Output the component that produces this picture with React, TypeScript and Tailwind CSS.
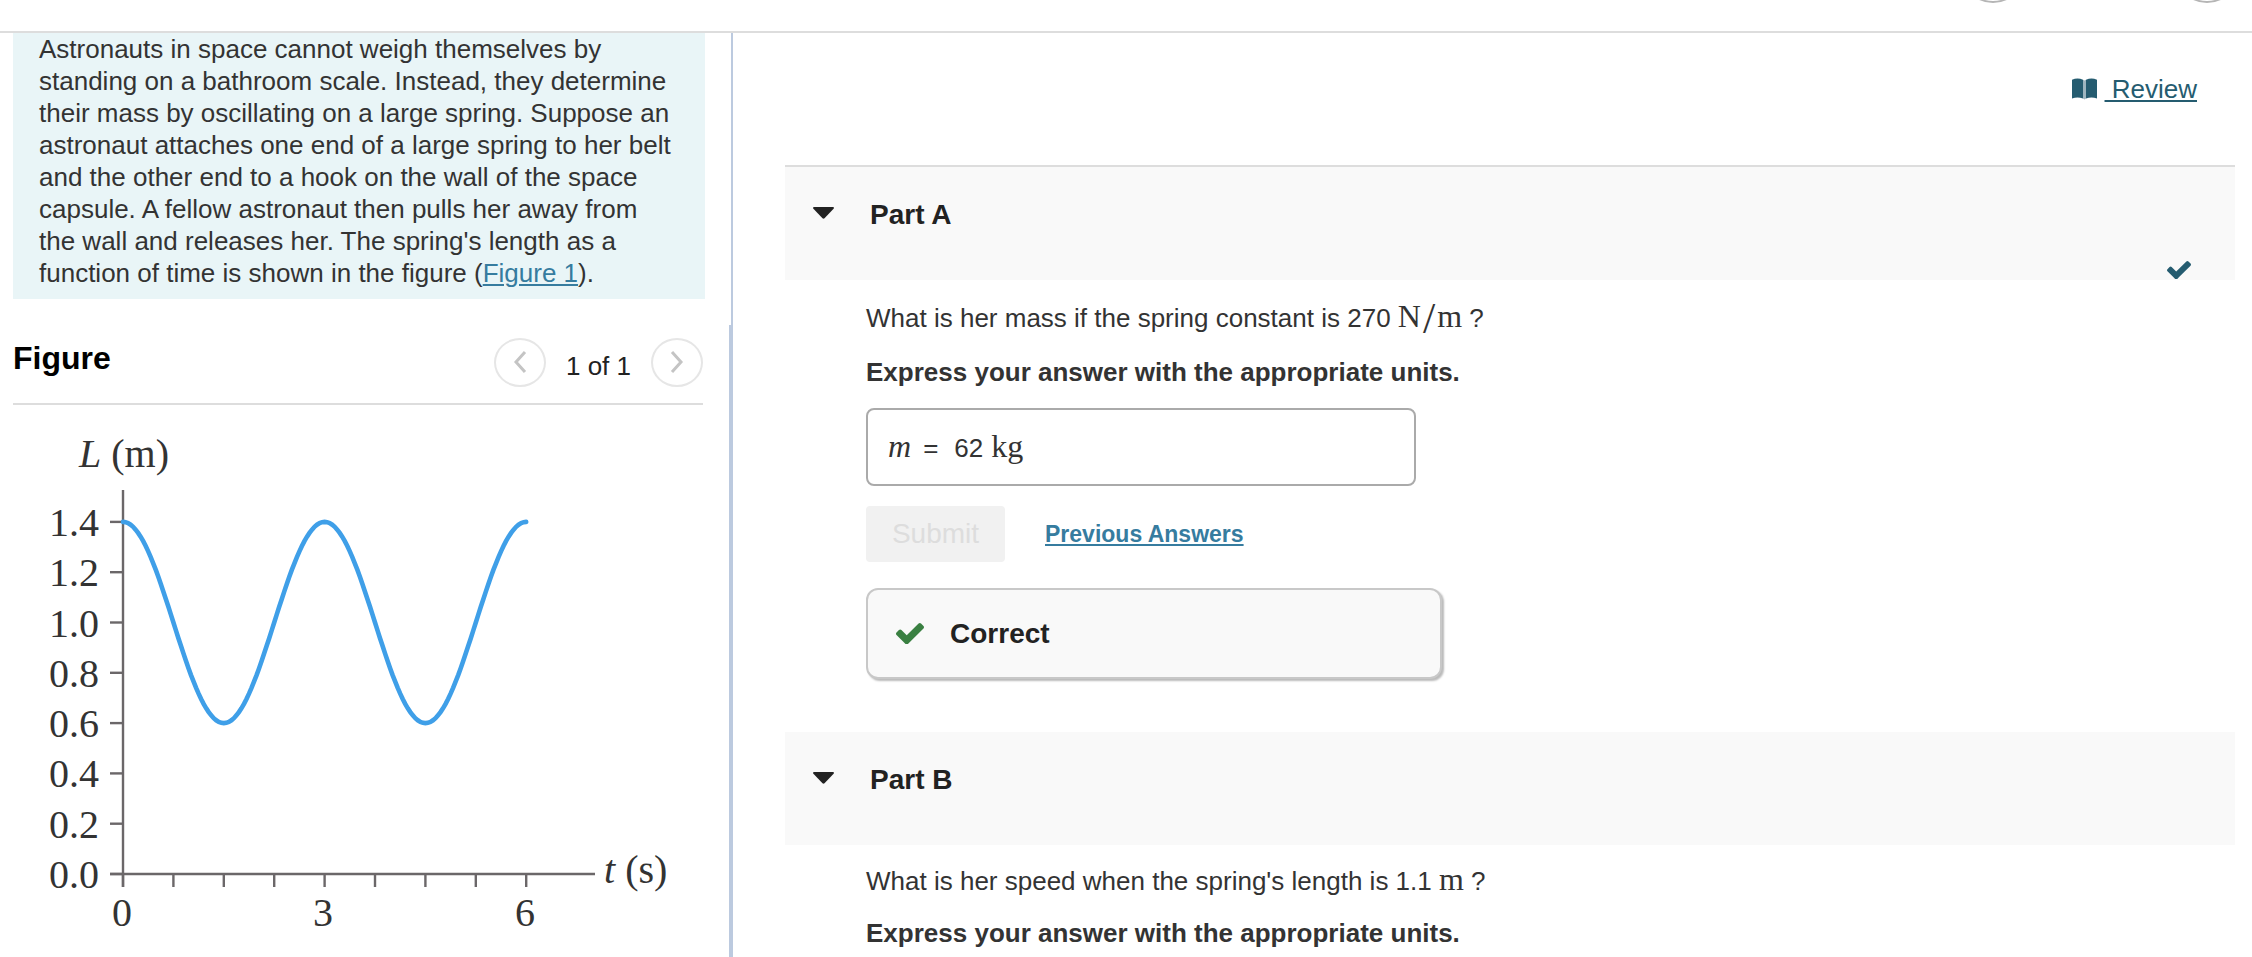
import type { ReactNode } from "react"

const Y_LABELS = ["0.0", "0.2", "0.4", "0.6", "0.8", "1.0", "1.2", "1.4"]
const X_TICKS = [0, 1, 2, 3, 4, 5, 6, 7, 8]

const ORIGIN_X = 110
const ORIGIN_Y = 469
const X_STEP = 50.4
const Y_STEP = 50.3

// L(t) = 1.0 + 0.4 cos(2πt / 3)
function buildCurve() {
  const points: string[] = []
  for (let i = 0; i <= 160; i++) {
    const t = (i / 160) * 6
    const length = 1 + 0.4 * Math.cos((2 * Math.PI * t) / 3)
    const x = ORIGIN_X + (t / 0.75) * X_STEP
    const y = ORIGIN_Y - (length / 0.2) * Y_STEP
    points.push(`${x.toFixed(1)},${y.toFixed(1)}`)
  }
  return points.join(" ")
}

function SpringChart() {
  return (
    <svg
      viewBox="0 0 690 560"
      className="block w-full font-['Liberation_Serif',serif] text-[40px]"
      fill="#333"
      role="img"
      aria-label="Spring length as a function of time"
    >
      <text x="66" y="62">
        <tspan fontStyle="italic">L</tspan>
        <tspan dx="10">(m)</tspan>
      </text>
      <g stroke="#6b6769" strokeWidth="2.4">
        <line x1={ORIGIN_X} y1="85" x2={ORIGIN_X} y2="482" />
        <line x1="97" y1={ORIGIN_Y} x2="582" y2={ORIGIN_Y} />
        {Y_LABELS.map((label, i) => (
          <line key={label} x1="97" x2={ORIGIN_X} y1={ORIGIN_Y - i * Y_STEP} y2={ORIGIN_Y - i * Y_STEP} />
        ))}
        {X_TICKS.map(i => (
          <line key={i} x1={ORIGIN_X + i * X_STEP} x2={ORIGIN_X + i * X_STEP} y1={ORIGIN_Y} y2="482" />
        ))}
      </g>
      {Y_LABELS.map((label, i) => (
        <text key={label} x="86" y={ORIGIN_Y + 14 - i * Y_STEP} textAnchor="end">
          {label}
        </text>
      ))}
      <text x="109" y="521" textAnchor="middle">0</text>
      <text x="310" y="521" textAnchor="middle">3</text>
      <text x="512" y="521" textAnchor="middle">6</text>
      <text x="591" y="478">
        <tspan fontStyle="italic">t</tspan>
        <tspan dx="10">(s)</tspan>
      </text>
      <polyline points={buildCurve()} fill="none" stroke="#3f9fe8" strokeWidth="4.6" strokeLinecap="round" />
    </svg>
  )
}

function CheckIcon({ className }: { className: string }) {
  return (
    <svg viewBox="121 334 1550 1188" fill="currentColor" aria-hidden="true" className={className}>
      <path d="M1671 566q0 40-28 68l-724 724-136 136q-28 28-68 28t-68-28l-136-136-362-362q-28-28-28-68t28-68l136-136q28-28 68-28t68 28l294 295 656-657q28-28 68-28t68 28l136 136q28 28 28 68z" />
    </svg>
  )
}

function BookIcon() {
  return (
    <svg width="25" height="22" viewBox="0 0 25 22" fill="currentColor" aria-hidden="true">
      <path d="M0 1.800Q5.500-.8 11 1.800V20.500Q5.500 18.600 0 20.500zM14 1.800Q19.500-.8 25 1.800V20.500Q19.500 18.600 14 20.500z" />
      <path d="M11 1.800 12.500 2.500 14 1.800V20.500L12.500 21.500 11 20.500z" opacity=".45" />
    </svg>
  )
}

function PagerButton({ label, path }: { label: string; path: string }) {
  return (
    <button
      aria-label={label}
      className="flex h-[49px] w-[52px] items-center justify-center rounded-[50%] border-2 border-[#e6e6e6] text-[#c4c4c4]"
    >
      <svg width="14" height="24" viewBox="0 0 14 24" fill="none" stroke="currentColor" strokeWidth="3">
        <path d={path} />
      </svg>
    </button>
  )
}

function MathText({ children }: { children: ReactNode }) {
  return <span className="font-['Liberation_Serif',serif] text-[32px] leading-8">{children}</span>
}

function PartHeader({ title, bordered, done }: { title: string; bordered?: boolean; done?: boolean }) {
  return (
    <div
      className={`flex justify-between bg-[#f9f9f9] ${bordered ? "h-[115px] border-t-2 border-[#ddd]" : "h-[113px]"}`}
    >
      <button className="flex h-24 items-center pl-7 text-[28px] font-bold text-[#222]">
        <svg width="21" height="16" viewBox="0 0 21 16" fill="currentColor" className="mr-9">
          <path d="M1 0h19q1.500 .4.600 1.700l-9.100 9.500q-1 .9-2 0L.4 1.700Q-.5.400 1 0z" />
        </svg>
        {title}
      </button>
      {done && (
        <span className="self-end pr-11 pb-px text-[#255c70]">
          <CheckIcon className="w-6" />
        </span>
      )}
    </div>
  )
}

export default function App() {
  return (
    <div className="flex h-screen flex-col overflow-hidden bg-white font-['Liberation_Sans',Arial,sans-serif] text-[26px] leading-8 text-[#333]">
      <header className="flex h-[33px] shrink-0 items-end justify-end gap-[150px] border-b-2 border-[#ddd] pr-[13px] pb-7">
        <button aria-label="Previous item" className="size-16 shrink-0 rounded-full border-2 border-[#b5b5b5]" />
        <button aria-label="Next item" className="size-16 shrink-0 rounded-full border-2 border-[#b5b5b5]" />
      </header>

      <div className="flex min-h-0 flex-1">
        <aside className="flex w-[32.55%] shrink-0 flex-col">
          <section className="border-r-2 border-[#bccadf] pr-[26px] pb-[26px] pl-[13px]">
            <p className="bg-[#e9f5f7] pr-8 pb-[10px] pl-[26px]">
              Astronauts in space cannot weigh themselves by standing on a bathroom scale. Instead, they determine
              their mass by oscillating on a large spring. Suppose an astronaut attaches one end of a large spring to
              her belt and the other end to a hook on the wall of the space capsule. A fellow astronaut then pulls her
              away from the wall and releases her. The spring's length as a function of time is shown in the figure (
              <a href="#figure" className="text-[#367c9f] underline">Figure 1</a>).
            </p>
          </section>

          <section id="figure" className="flex-1 border-r-4 border-[#bccadf] pr-[26px] pl-[13px]">
            <div className="flex h-20 items-center justify-between border-b-2 border-[#ddd] pb-1">
              <h2 className="pb-2 text-[32px] font-bold text-black">Figure</h2>
              <div className="flex items-center gap-5">
                <PagerButton label="Previous figure" path="M12 2 3 12l9 10" />
                <span className="pt-2 text-[#222]">1 of 1</span>
                <PagerButton label="Next figure" path="m2 2 9 10-9 10" />
              </div>
            </div>
            <SpringChart />
          </section>
        </aside>

        <main className="min-w-0 flex-1 pr-[17px] pl-[52px]">
          <div className="flex h-[132px] justify-end pt-10 pr-[38px]">
            <a href="#review" className="flex h-8 items-center gap-2 text-[#255c70]">
              <BookIcon />
              <span className="whitespace-pre underline"> Review</span>
            </a>
          </div>

          <section>
            <PartHeader title="Part A" bordered done />
            <div className="pt-[18px] pb-[53px] pl-[81px]">
              <p className="leading-10">
                What is her mass if the spring constant is 270{" "}
                <MathText>
                  N<span className="mx-0.5 align-[-6px] text-[44px]">/</span>m
                </MathText>{" "}
                ?
              </p>
              <p className="mt-[18px] font-bold">Express your answer with the appropriate units.</p>
              <div className="mt-5 flex h-[78px] w-[550px] items-center rounded-lg border-2 border-[#aaa] px-5">
                <div className="flex items-baseline">
                  <label htmlFor="mass" className="mr-4 flex items-baseline gap-3">
                    <i>
                      <MathText>m</MathText>
                    </i>
                    <span>=</span>
                  </label>
                  <input id="mass" readOnly value="62" className="mr-2 w-[29px] outline-none" />
                  <MathText>kg</MathText>
                </div>
              </div>
              <div className="mt-5 flex items-center gap-10">
                <button disabled className="h-14 w-[139px] rounded bg-[#f1f1f1] text-[28px] text-[#ddd]">
                  Submit
                </button>
                <a href="#answers" className="text-[23px] font-bold text-[#367c9f] underline">
                  Previous Answers
                </a>
              </div>
              <div className="mt-[26px] flex h-[91px] w-[576px] items-center gap-[26px] rounded-xl border-2 border-[#c8c8c8] bg-[#f9f9f9] pl-7 text-[28px] font-bold text-[#222] shadow-[2px_2px_2px_#bbb]">
                <CheckIcon className="w-7 text-[#3a8042]" />
                Correct
              </div>
            </div>
          </section>

          <section>
            <PartHeader title="Part B" />
            <div className="pt-[18px] pl-[81px]">
              <p className="leading-9">
                What is her speed when the spring's length is 1.1 <MathText>m</MathText> ?
              </p>
              <p className="mt-[18px] font-bold">Express your answer with the appropriate units.</p>
            </div>
          </section>
        </main>
      </div>
    </div>
  )
}
